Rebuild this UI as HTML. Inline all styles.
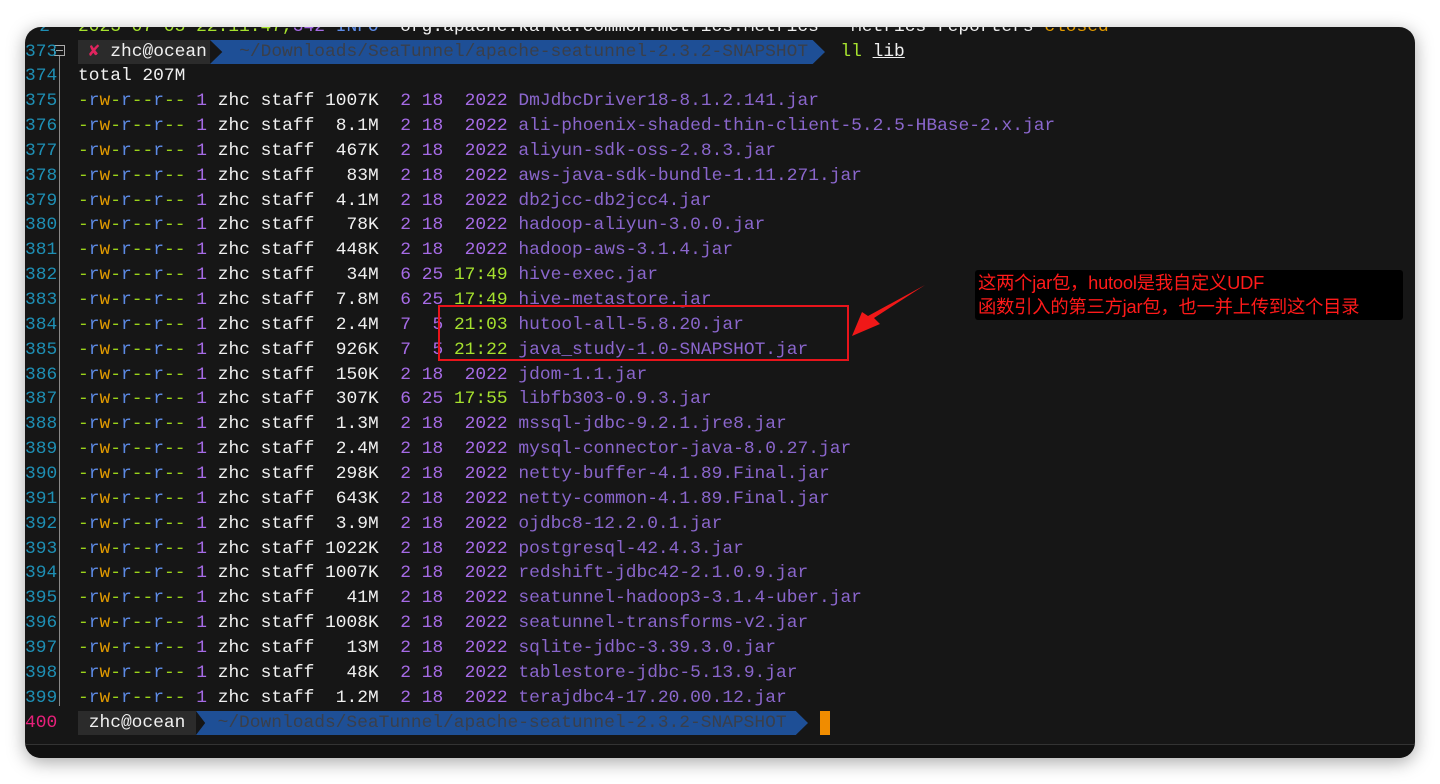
<!DOCTYPE html>
<html><head><meta charset="utf-8"><style>
body{margin:0;width:1440px;height:784px;background:#fff;overflow:hidden;font-family:"Liberation Mono",monospace}
#win{position:absolute;left:25px;top:27px;width:1390px;height:731px;border-radius:16px;background:#161616;overflow:hidden;box-shadow:0 4px 18px rgba(0,0,0,.35)}
#in{position:absolute;left:0;top:2px;width:1390px;height:731px}
.ln{position:absolute;left:0;width:25px;text-align:right;font-size:17.9px;color:#1e8fb4;white-space:pre;line-height:24.85px}
.row{position:absolute;left:53px;font-size:17.9px;color:#f0f0f0;white-space:pre;line-height:24.85px;height:24.85px}
.g{color:#9bd41a}.b{color:#5d8be6}.o{color:#e39b00}.p{color:#a66be6}.f{color:#8a66cc}.t{color:#a6e22e}.w{color:#f0f0f0}
.seg1{position:absolute;background:#2b2b2b}
.seg2{position:absolute;background:#1e4f96;color:#3a3f4a}
</style></head><body>
<div id="win"><div id="in">
<div class="ln" style="top:-14px">2</div>
<div class="row" style="top:-14px"><span class="t">2023-07-05 22:11:47,</span><span class="p">342</span> <span class="b">INFO</span>  <span class="w">org.apache.kafka.common.metrics.Metrics - Metrics reporters </span><span class="o">closed</span></div>
<div style="position:absolute;left:29px;top:16px;width:9px;height:9px;border:1px solid #aaa"></div>
<div style="position:absolute;left:31px;top:21px;width:7px;height:1px;background:#aaa"></div>
<div style="position:absolute;left:34px;top:27px;width:1px;height:650px;background:#888"></div>
<div class="seg1" style="left:53px;top:11px;width:132px;height:24px"></div>
<div class="seg2" style="left:185px;top:11px;width:615px;height:24px;clip-path:polygon(0 0,98% 0,100% 50%,98% 100%,0 100%,2% 50%)"></div>
<div class="ln" style="top:10.5px">373</div>
<div class="row" style="top:10.5px"> <span style="color:#e0245e">✘</span> zhc@ocean   <span style="color:#3a3f4a">~/Downloads/SeaTunnel/apache-seatunnel-2.3.2-SNAPSHOT</span>   <span class="t">ll</span> <span style="text-decoration:underline">lib</span></div>
<div class="ln" style="top:35.3px">374</div>
<div class="row" style="top:35.3px">total 207M</div>
<div class="ln" style="top:60.2px">375</div><div class="row" style="top:60.2px"><span class="g">-</span><span class="b">r</span><span class="o">w</span><span class="g">-</span><span class="b">r</span><span class="g">--</span><span class="b">r</span><span class="g">--</span> <span class="p">1</span> zhc staff 1007K  <span class="p">2 18  2022</span> <span class="f">DmJdbcDriver18-8.1.2.141.jar</span></div>
<div class="ln" style="top:85.0px">376</div><div class="row" style="top:85.0px"><span class="g">-</span><span class="b">r</span><span class="o">w</span><span class="g">-</span><span class="b">r</span><span class="g">--</span><span class="b">r</span><span class="g">--</span> <span class="p">1</span> zhc staff  8.1M  <span class="p">2 18  2022</span> <span class="f">ali-phoenix-shaded-thin-client-5.2.5-HBase-2.x.jar</span></div>
<div class="ln" style="top:109.9px">377</div><div class="row" style="top:109.9px"><span class="g">-</span><span class="b">r</span><span class="o">w</span><span class="g">-</span><span class="b">r</span><span class="g">--</span><span class="b">r</span><span class="g">--</span> <span class="p">1</span> zhc staff  467K  <span class="p">2 18  2022</span> <span class="f">aliyun-sdk-oss-2.8.3.jar</span></div>
<div class="ln" style="top:134.7px">378</div><div class="row" style="top:134.7px"><span class="g">-</span><span class="b">r</span><span class="o">w</span><span class="g">-</span><span class="b">r</span><span class="g">--</span><span class="b">r</span><span class="g">--</span> <span class="p">1</span> zhc staff   83M  <span class="p">2 18  2022</span> <span class="f">aws-java-sdk-bundle-1.11.271.jar</span></div>
<div class="ln" style="top:159.6px">379</div><div class="row" style="top:159.6px"><span class="g">-</span><span class="b">r</span><span class="o">w</span><span class="g">-</span><span class="b">r</span><span class="g">--</span><span class="b">r</span><span class="g">--</span> <span class="p">1</span> zhc staff  4.1M  <span class="p">2 18  2022</span> <span class="f">db2jcc-db2jcc4.jar</span></div>
<div class="ln" style="top:184.4px">380</div><div class="row" style="top:184.4px"><span class="g">-</span><span class="b">r</span><span class="o">w</span><span class="g">-</span><span class="b">r</span><span class="g">--</span><span class="b">r</span><span class="g">--</span> <span class="p">1</span> zhc staff   78K  <span class="p">2 18  2022</span> <span class="f">hadoop-aliyun-3.0.0.jar</span></div>
<div class="ln" style="top:209.3px">381</div><div class="row" style="top:209.3px"><span class="g">-</span><span class="b">r</span><span class="o">w</span><span class="g">-</span><span class="b">r</span><span class="g">--</span><span class="b">r</span><span class="g">--</span> <span class="p">1</span> zhc staff  448K  <span class="p">2 18  2022</span> <span class="f">hadoop-aws-3.1.4.jar</span></div>
<div class="ln" style="top:234.1px">382</div><div class="row" style="top:234.1px"><span class="g">-</span><span class="b">r</span><span class="o">w</span><span class="g">-</span><span class="b">r</span><span class="g">--</span><span class="b">r</span><span class="g">--</span> <span class="p">1</span> zhc staff   34M  <span class="p">6 25</span> <span class="t">17:49</span> <span class="f">hive-exec.jar</span></div>
<div class="ln" style="top:259.0px">383</div><div class="row" style="top:259.0px"><span class="g">-</span><span class="b">r</span><span class="o">w</span><span class="g">-</span><span class="b">r</span><span class="g">--</span><span class="b">r</span><span class="g">--</span> <span class="p">1</span> zhc staff  7.8M  <span class="p">6 25</span> <span class="t">17:49</span> <span class="f">hive-metastore.jar</span></div>
<div class="ln" style="top:283.8px">384</div><div class="row" style="top:283.8px"><span class="g">-</span><span class="b">r</span><span class="o">w</span><span class="g">-</span><span class="b">r</span><span class="g">--</span><span class="b">r</span><span class="g">--</span> <span class="p">1</span> zhc staff  2.4M  <span class="p">7  5</span> <span class="t">21:03</span> <span class="f">hutool-all-5.8.20.jar</span></div>
<div class="ln" style="top:308.7px">385</div><div class="row" style="top:308.7px"><span class="g">-</span><span class="b">r</span><span class="o">w</span><span class="g">-</span><span class="b">r</span><span class="g">--</span><span class="b">r</span><span class="g">--</span> <span class="p">1</span> zhc staff  926K  <span class="p">7  5</span> <span class="t">21:22</span> <span class="f">java_study-1.0-SNAPSHOT.jar</span></div>
<div class="ln" style="top:333.5px">386</div><div class="row" style="top:333.5px"><span class="g">-</span><span class="b">r</span><span class="o">w</span><span class="g">-</span><span class="b">r</span><span class="g">--</span><span class="b">r</span><span class="g">--</span> <span class="p">1</span> zhc staff  150K  <span class="p">2 18  2022</span> <span class="f">jdom-1.1.jar</span></div>
<div class="ln" style="top:358.4px">387</div><div class="row" style="top:358.4px"><span class="g">-</span><span class="b">r</span><span class="o">w</span><span class="g">-</span><span class="b">r</span><span class="g">--</span><span class="b">r</span><span class="g">--</span> <span class="p">1</span> zhc staff  307K  <span class="p">6 25</span> <span class="t">17:55</span> <span class="f">libfb303-0.9.3.jar</span></div>
<div class="ln" style="top:383.2px">388</div><div class="row" style="top:383.2px"><span class="g">-</span><span class="b">r</span><span class="o">w</span><span class="g">-</span><span class="b">r</span><span class="g">--</span><span class="b">r</span><span class="g">--</span> <span class="p">1</span> zhc staff  1.3M  <span class="p">2 18  2022</span> <span class="f">mssql-jdbc-9.2.1.jre8.jar</span></div>
<div class="ln" style="top:408.1px">389</div><div class="row" style="top:408.1px"><span class="g">-</span><span class="b">r</span><span class="o">w</span><span class="g">-</span><span class="b">r</span><span class="g">--</span><span class="b">r</span><span class="g">--</span> <span class="p">1</span> zhc staff  2.4M  <span class="p">2 18  2022</span> <span class="f">mysql-connector-java-8.0.27.jar</span></div>
<div class="ln" style="top:432.9px">390</div><div class="row" style="top:432.9px"><span class="g">-</span><span class="b">r</span><span class="o">w</span><span class="g">-</span><span class="b">r</span><span class="g">--</span><span class="b">r</span><span class="g">--</span> <span class="p">1</span> zhc staff  298K  <span class="p">2 18  2022</span> <span class="f">netty-buffer-4.1.89.Final.jar</span></div>
<div class="ln" style="top:457.8px">391</div><div class="row" style="top:457.8px"><span class="g">-</span><span class="b">r</span><span class="o">w</span><span class="g">-</span><span class="b">r</span><span class="g">--</span><span class="b">r</span><span class="g">--</span> <span class="p">1</span> zhc staff  643K  <span class="p">2 18  2022</span> <span class="f">netty-common-4.1.89.Final.jar</span></div>
<div class="ln" style="top:482.6px">392</div><div class="row" style="top:482.6px"><span class="g">-</span><span class="b">r</span><span class="o">w</span><span class="g">-</span><span class="b">r</span><span class="g">--</span><span class="b">r</span><span class="g">--</span> <span class="p">1</span> zhc staff  3.9M  <span class="p">2 18  2022</span> <span class="f">ojdbc8-12.2.0.1.jar</span></div>
<div class="ln" style="top:507.5px">393</div><div class="row" style="top:507.5px"><span class="g">-</span><span class="b">r</span><span class="o">w</span><span class="g">-</span><span class="b">r</span><span class="g">--</span><span class="b">r</span><span class="g">--</span> <span class="p">1</span> zhc staff 1022K  <span class="p">2 18  2022</span> <span class="f">postgresql-42.4.3.jar</span></div>
<div class="ln" style="top:532.3px">394</div><div class="row" style="top:532.3px"><span class="g">-</span><span class="b">r</span><span class="o">w</span><span class="g">-</span><span class="b">r</span><span class="g">--</span><span class="b">r</span><span class="g">--</span> <span class="p">1</span> zhc staff 1007K  <span class="p">2 18  2022</span> <span class="f">redshift-jdbc42-2.1.0.9.jar</span></div>
<div class="ln" style="top:557.2px">395</div><div class="row" style="top:557.2px"><span class="g">-</span><span class="b">r</span><span class="o">w</span><span class="g">-</span><span class="b">r</span><span class="g">--</span><span class="b">r</span><span class="g">--</span> <span class="p">1</span> zhc staff   41M  <span class="p">2 18  2022</span> <span class="f">seatunnel-hadoop3-3.1.4-uber.jar</span></div>
<div class="ln" style="top:582.0px">396</div><div class="row" style="top:582.0px"><span class="g">-</span><span class="b">r</span><span class="o">w</span><span class="g">-</span><span class="b">r</span><span class="g">--</span><span class="b">r</span><span class="g">--</span> <span class="p">1</span> zhc staff 1008K  <span class="p">2 18  2022</span> <span class="f">seatunnel-transforms-v2.jar</span></div>
<div class="ln" style="top:606.9px">397</div><div class="row" style="top:606.9px"><span class="g">-</span><span class="b">r</span><span class="o">w</span><span class="g">-</span><span class="b">r</span><span class="g">--</span><span class="b">r</span><span class="g">--</span> <span class="p">1</span> zhc staff   13M  <span class="p">2 18  2022</span> <span class="f">sqlite-jdbc-3.39.3.0.jar</span></div>
<div class="ln" style="top:631.7px">398</div><div class="row" style="top:631.7px"><span class="g">-</span><span class="b">r</span><span class="o">w</span><span class="g">-</span><span class="b">r</span><span class="g">--</span><span class="b">r</span><span class="g">--</span> <span class="p">1</span> zhc staff   48K  <span class="p">2 18  2022</span> <span class="f">tablestore-jdbc-5.13.9.jar</span></div>
<div class="ln" style="top:656.6px">399</div><div class="row" style="top:656.6px"><span class="g">-</span><span class="b">r</span><span class="o">w</span><span class="g">-</span><span class="b">r</span><span class="g">--</span><span class="b">r</span><span class="g">--</span> <span class="p">1</span> zhc staff  1.2M  <span class="p">2 18  2022</span> <span class="f">terajdbc4-17.20.00.12.jar</span></div>
<div class="seg1" style="left:53px;top:682px;width:118px;height:24px"></div>
<div class="seg2" style="left:171px;top:682px;width:612px;height:24px;clip-path:polygon(0 0,98% 0,100% 50%,98% 100%,0 100%,1.5% 50%)"></div>
<div class="ln" style="top:681.5px;color:#e8207a">400</div>
<div class="row" style="top:681.5px"> zhc@ocean   <span style="color:#3a3f4a">~/Downloads/SeaTunnel/apache-seatunnel-2.3.2-SNAPSHOT</span></div>
<div style="position:absolute;left:795px;top:682px;width:10px;height:24px;background:#f08c00"></div>
</div>
<div style="position:absolute;left:0;top:717px;width:1390px;height:1px;background:#333"></div>
<div style="position:absolute;left:0;top:718px;width:1390px;height:14px;background:#111"></div>
</div>
<div style="position:absolute;left:438px;top:305px;width:411px;height:56px;border:2px solid #e8141b;box-sizing:border-box"></div>
<svg style="position:absolute;left:0;top:0" width="1440" height="784"><polygon points="925,285 874,318 880,324 852,336 862,312 868,316" fill="#f01818"/></svg>
<div style="position:absolute;left:975px;top:270px;width:428px;height:50px;background:#000;border-radius:3px;color:#ff1a1a;font-family:'Liberation Sans','Noto Sans CJK SC',sans-serif;font-size:18.3px;line-height:24px;padding:1px 3px;box-sizing:border-box;white-space:nowrap;letter-spacing:-0.2px">这两个jar包，hutool是我自定义UDF<br>函数引入的第三方jar包，也一并上传到这个目录</div>
</body></html>
